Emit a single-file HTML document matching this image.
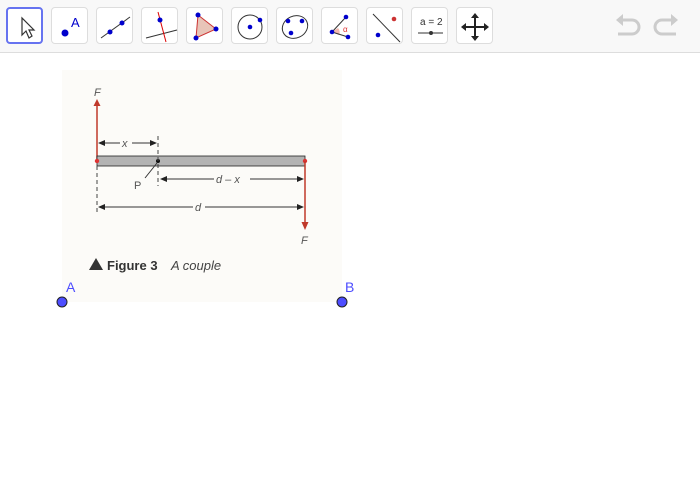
<!DOCTYPE html>
<html><head><style>
body{margin:0;width:700px;height:500px;background:#fff;position:relative;overflow:hidden;font-family:"Liberation Sans",sans-serif}
.tb{position:absolute;left:0;top:0;width:700px;height:52px;background:#f8f8f8;border-bottom:1px solid #ddd}
.b{position:absolute;top:7px;width:37px;height:37px;background:#fff;border:1px solid #ddd;border-radius:4px;box-sizing:border-box}
.b svg{position:absolute;left:0;top:0}
</style></head><body>
<div class="tb">
<div class="b" style="left:6px;border:2px solid #6673f0"><svg width="35" height="35"><path d="M14 9 L14 26 L18 22 L21 29 L24 27 L21 21 L26 21 Z" fill="#fff" stroke="#333" stroke-width="1.2"/></svg></div>
<div class="b" style="left:51px"><svg width="37" height="37"><circle cx="13" cy="25" r="3.5" fill="#00c"/><text x="19" y="19" font-size="13" fill="#00c">A</text></svg></div>
<div class="b" style="left:96px"><svg width="37" height="37"><line x1="4" y1="30" x2="33" y2="9" stroke="#333"/><circle cx="13" cy="24" r="2.5" fill="#00c"/><circle cx="25" cy="15" r="2.5" fill="#00c"/></svg></div>
<div class="b" style="left:141px"><svg width="37" height="37"><line x1="4" y1="30" x2="35" y2="22" stroke="#333"/><line x1="16" y1="4" x2="24" y2="34" stroke="#d00"/><circle cx="18" cy="12" r="2.5" fill="#00c"/></svg></div>
<div class="b" style="left:186px"><svg width="37" height="37"><path d="M11 7 L29 21 L9 30 Z" fill="#e8c4b8" stroke="#c33"/><circle cx="11" cy="7" r="2.5" fill="#00c"/><circle cx="29" cy="21" r="2.5" fill="#00c"/><circle cx="9" cy="30" r="2.5" fill="#00c"/></svg></div>
<div class="b" style="left:231px"><svg width="37" height="37"><circle cx="18" cy="19" r="12" fill="none" stroke="#333"/><circle cx="18" cy="19" r="2.3" fill="#00c"/><circle cx="28" cy="12" r="2.3" fill="#00c"/></svg></div>
<div class="b" style="left:276px"><svg width="37" height="37"><ellipse cx="18" cy="19" rx="13" ry="11" transform="rotate(-25 18 19)" fill="none" stroke="#333"/><circle cx="11" cy="13" r="2.3" fill="#00c"/><circle cx="25" cy="13" r="2.3" fill="#00c"/><circle cx="14" cy="25" r="2.3" fill="#00c"/></svg></div>
<div class="b" style="left:321px"><svg width="37" height="37"><path d="M10 24 L16 20 A6 6 0 0 1 17 27 Z" fill="#f3b8b0"/><line x1="10" y1="24" x2="24" y2="9" stroke="#333"/><line x1="10" y1="24" x2="26" y2="29" stroke="#333"/><circle cx="10" cy="24" r="2.3" fill="#00c"/><circle cx="24" cy="9" r="2.3" fill="#00c"/><circle cx="26" cy="29" r="2.3" fill="#00c"/><text x="21" y="24" font-size="8" fill="#d33">α</text></svg></div>
<div class="b" style="left:366px"><svg width="37" height="37"><line x1="6" y1="6" x2="33" y2="34" stroke="#333"/><circle cx="11" cy="27" r="2.3" fill="#00c"/><circle cx="27" cy="11" r="2.3" fill="#c33"/></svg></div>
<div class="b" style="left:411px"><svg width="37" height="37"><text x="8" y="17" font-size="10" fill="#333">a = 2</text><line x1="6" y1="25" x2="31" y2="25" stroke="#333"/><circle cx="19" cy="25" r="2" fill="#333"/></svg></div>
<div class="b" style="left:456px"><svg width="37" height="37"><path d="M18 8 V30 M7 19 H29" stroke="#222" stroke-width="2"/><path d="M18 5 l-4 5 h8z M18 33 l-4 -5 h8z M4 19 l5 -4 v8z M32 19 l-5 -4 v8z" fill="#222"/></svg></div>
<svg style="position:absolute;left:610px;top:10px" width="75" height="32"><path d="M10 10 H22 A7 7 0 0 1 22 24 H8" fill="none" stroke="#ccc" stroke-width="3"/><path d="M6 10 l7 -6 v12z" fill="#ccc"/><path d="M64 10 H52 A7 7 0 0 0 52 24 H66" fill="none" stroke="#ccc" stroke-width="3"/><path d="M68 10 l-7 -6 v12z" fill="#ccc"/></svg>
</div>
<svg style="position:absolute;left:0;top:0" width="700" height="500">
<rect x="62" y="70" width="280" height="232" fill="#fcfbf8"/>
<g font-family="Liberation Sans" fill="#555">
<line x1="97" y1="160" x2="97" y2="104" stroke="#c0392b" stroke-width="1.5"/><path d="M97 99 l-3.5 7 h7z" fill="#c0392b"/>
<text x="94" y="96" font-size="11" font-style="italic">F</text>
<rect x="97" y="156" width="208" height="10" fill="#b3b3b3" stroke="#222" stroke-width="0.8"/>
<circle cx="97" cy="161" r="2.2" fill="#d33"/><circle cx="305" cy="161" r="2.2" fill="#d33"/><circle cx="158" cy="161" r="2" fill="#111"/>
<line x1="158" y1="136" x2="158" y2="186" stroke="#444" stroke-dasharray="4,3"/>
<line x1="97" y1="166" x2="97" y2="213" stroke="#444" stroke-dasharray="4,3"/>
<line x1="305" y1="161" x2="305" y2="222" stroke="#c0392b" stroke-width="1.5"/><path d="M305 230 l-3.5 -8 h7z" fill="#c0392b"/>
<text x="301" y="244" font-size="11" font-style="italic">F</text>
<g stroke="#333" stroke-width="1"><line x1="99" y1="143" x2="120" y2="143"/><line x1="132" y1="143" x2="156" y2="143"/>
<line x1="162" y1="179" x2="214" y2="179"/><line x1="250" y1="179" x2="303" y2="179"/>
<line x1="99" y1="207" x2="193" y2="207"/><line x1="205" y1="207" x2="303" y2="207"/>
<line x1="157" y1="163" x2="145" y2="178"/></g>
<g fill="#222"><path d="M98 143 l7 -3 v6z M157 143 l-7 -3 v6z M160 179 l7 -3 v6z M304 179 l-7 -3 v6z M98 207 l7 -3 v6z M304 207 l-7 -3 v6z"/></g>
<text x="122" y="147" font-size="11" font-style="italic">x</text>
<text x="216" y="183" font-size="11" font-style="italic">d – x</text>
<text x="195" y="211" font-size="11" font-style="italic">d</text>
<text x="134" y="189" font-size="11">P</text>
<path d="M89 270 l7 -12 l7 12z" fill="#333"/>
<text x="107" y="270" font-size="13" font-weight="bold" fill="#333">Figure 3</text>
<text x="171" y="270" font-size="13" font-style="italic" fill="#444">A couple</text>
</g>
<circle cx="62" cy="302" r="5" fill="#4d4dff" stroke="#222" stroke-width="1"/>
<circle cx="342" cy="302" r="5" fill="#4d4dff" stroke="#222" stroke-width="1"/>
<text x="66" y="292" font-size="14" fill="#4d4dff">A</text>
<text x="345" y="292" font-size="14" fill="#4d4dff">B</text>
</svg>
</body></html>
